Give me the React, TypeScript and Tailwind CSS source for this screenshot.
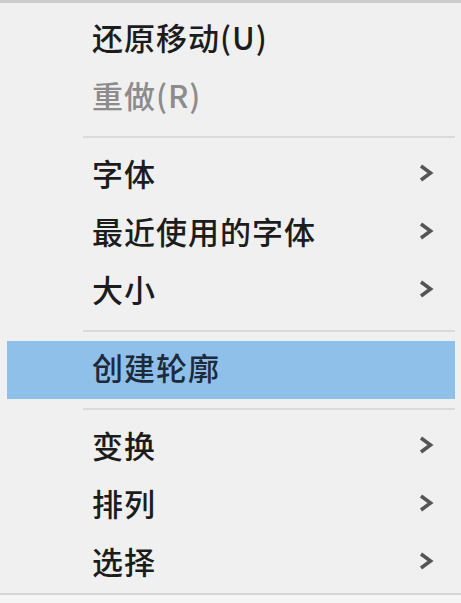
const items: ({ label: string; arrow?: boolean; disabled?: boolean; active?: boolean } | "sep")[] = [
  { label: "还原移动(U)" },
  { label: "重做(R)", disabled: true },
  "sep",
  { label: "字体", arrow: true },
  { label: "最近使用的字体", arrow: true },
  { label: "大小", arrow: true },
  "sep",
  { label: "创建轮廓", active: true },
  "sep",
  { label: "变换", arrow: true },
  { label: "排列", arrow: true },
  { label: "选择", arrow: true },
];

const Chevron = () => (
  <svg width="18" height="20" viewBox="0 0 18 20" fill="none" className="shrink-0">
    <path d="M4 3 L13.5 10 L4 17" stroke="#555555" strokeWidth="3.6" strokeLinejoin="miter" />
  </svg>
);

export default function App() {
  return (
    <div
      className="w-[461px] h-[603px] bg-[#f5f5f5] overflow-hidden"
      style={{ fontFamily: '"Noto Sans CJK SC", "Noto Sans", sans-serif' }}
    >
      <div className="h-[3px] bg-[#cdcdcd]" />
      <div className="bg-[#f0f0f0] pt-[8px] pl-[7px] pr-[6px]">
        {items.map((item, i) =>
          item === "sep" ? (
            <div key={i} className="h-[20px] flex items-center pl-[76px]">
              <div className="h-[2px] w-full bg-[#dadada]" />
            </div>
          ) : (
            <div
              key={i}
              className={`h-[58px] flex items-center justify-between pl-[85px] pr-[20px] pb-[7px] ${
                item.active ? "bg-[#8fc0ea]" : ""
              }`}
            >
              <span
                className={`text-[31px] leading-none font-medium tracking-[1px] ${
                  item.disabled ? "text-[#8c8c8c]" : item.active ? "text-[#1d2a3a]" : "text-[#1c1c1c]"
                }`}
              >
                {item.label}
              </span>
              {item.arrow && <Chevron />}
            </div>
          )
        )}
      </div>
      <div className="h-[2px] bg-[#d6d6d6]" />
    </div>
  );
}
